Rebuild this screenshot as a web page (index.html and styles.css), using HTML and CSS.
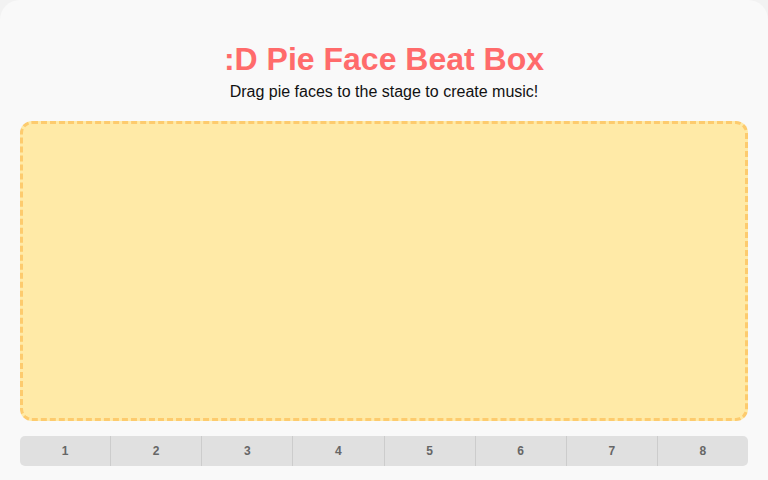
FILE: index.html
```html
<!DOCTYPE html>
<html lang="en">
<head>
    <meta charset="UTF-8">
    <meta name="viewport" content="width=device-width, initial-scale=1.0">
    <title>Pie Face Beat Box</title>
    <link rel="stylesheet" href="styles.css">
</head>
<body>
    <div class="app">
        <h1 class="title">:D Pie Face Beat Box</h1>
        <p class="subtitle">Drag pie faces to the stage to create music!</p>
        <div class="stage" id="stage"></div>
        <div class="beats">
            <div class="beat">1</div>
            <div class="beat">2</div>
            <div class="beat">3</div>
            <div class="beat">4</div>
            <div class="beat">5</div>
            <div class="beat">6</div>
            <div class="beat">7</div>
            <div class="beat">8</div>
        </div>
    </div>
</body>
</html>
```
FILE: styles.css
```css
body {
    margin: 0;
    font-family: "Liberation Sans", Arial, sans-serif;
    background-color: #f2f2f2;
}
.app {
    background: #f9f9f9;
    border-radius: 20px 20px 0 0;
    height: 480px;
    box-sizing: border-box;
    padding: 20px;
    text-align: center;
}
.title {
    color: #ff6b6b;
    font-size: 32px;
    margin: 21px 0 5px;
}
.subtitle {
    font-size: 16px;
    margin: 0;
    color: #111;
}
.stage {
    margin-top: 20px;
    height: 300px;
    box-sizing: border-box;
    background: #ffeaa7;
    border: 3px dashed #fdcb6e;
    border-radius: 12px;
}
.beats {
    display: flex;
    margin-top: 15px;
    height: 30px;
    background: #e0e0e0;
    border-radius: 5px;
    overflow: hidden;
}
.beat {
    flex: 1;
    display: flex;
    align-items: center;
    justify-content: center;
    font-size: 12px;
    font-weight: bold;
    color: #666;
    border-right: 1px solid #ccc;
}
.beat:last-child {
    border-right: none;
}
```
